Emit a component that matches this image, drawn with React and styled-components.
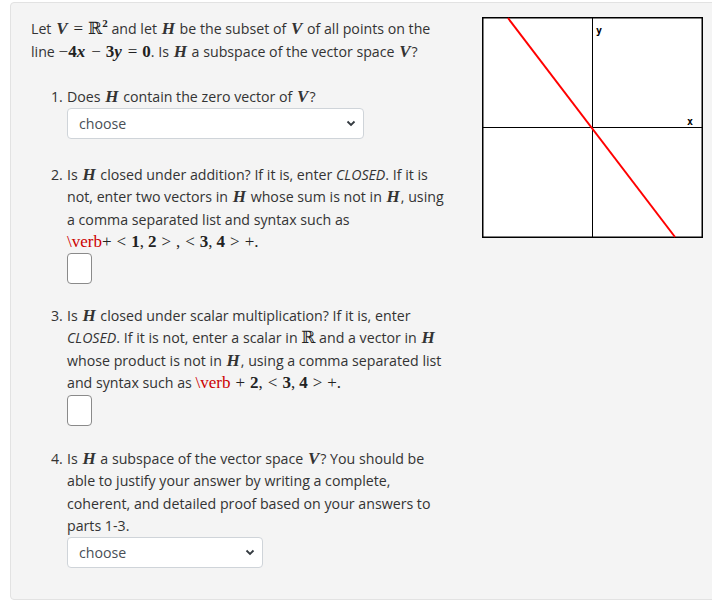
import React from 'react'
import styled, { createGlobalStyle } from 'styled-components'

const Global = createGlobalStyle`
    html, body {
        margin: 0;
        padding: 0;
        background: #ffffff;
        overflow: hidden;
    }
    body {
        font-family: "Open Sans", "Liberation Sans", sans-serif;
        font-size: 14.2px;
        color: #333333;
    }
`

const Panel = styled.div`
    margin: 2px 0 0 10px;
    width: 760px;
    height: 598px;
    box-sizing: border-box;
    background: #f4f4f4;
    border: 1px solid #e2e2e2;
    border-radius: 4px;
    padding: 15px 0 0 20px;
    display: flex;
    gap: 35px;
    align-items: flex-start;
`

const TextCol = styled.div`
    width: 416px;
    line-height: 22.5px;
`

const Para = styled.p`
    margin: 0;
`

const Item = styled.div`
    display: flex;
    margin-top: ${props => props.gap || 24}px;
`

const ItemNum = styled.span`
    width: 16px;
    padding-left: 20px;
    flex-shrink: 0;
`

const ItemBody = styled.div`
    flex: 1;
`

const Var = styled.span`
    font-family: "Liberation Serif", "DejaVu Serif", serif;
    font-style: italic;
    font-weight: bold;
    font-size: 17px;
    line-height: 0;
    padding: 0 1px;
`

const MathRun = styled.span`
    font-family: "Liberation Serif", "DejaVu Serif", serif;
    font-size: 17px;
    line-height: 0;
    white-space: nowrap;
    color: #222;
    & b {
        font-weight: bold;
    }
    & i {
        font-weight: bold;
        padding-right: 1px;
    }
    & sup {
        font-size: 11px;
        line-height: 0;
    }
`

const Op = styled.span`
    padding: 0 ${props => props.sp ?? 5}px;
    font-weight: normal;
`

const Err = styled.span`
    color: #cc0000;
`

const Emph = styled.em`
    font-style: italic;
`

const SelectWrap = styled.div`
    position: relative;
    width: ${props => props.w}px;
    height: 31px;
    margin-top: ${props => props.top || 0}px;
`

const Select = styled.select`
    appearance: none;
    -webkit-appearance: none;
    width: 100%;
    height: 100%;
    box-sizing: border-box;
    border: 1px solid #cfd4d9;
    border-radius: 4px;
    background: #ffffff;
    font-family: "Open Sans", "Liberation Sans", sans-serif;
    font-size: 14.2px;
    color: #495057;
    padding: 0 11px;
    outline: none;
`

const Chevron = styled.svg`
    position: absolute;
    right: 8px;
    top: 12px;
    pointer-events: none;
`

const AnswerBox = styled.input`
    display: block;
    width: 25px;
    height: 31px;
    box-sizing: border-box;
    border: 1px solid #8a8a8a;
    border-radius: 4px;
    background: #ffffff;
    margin-top: ${props => props.top || 0}px;
    padding: 0;
`

const Graph = styled.svg`
    flex-shrink: 0;
    display: block;
    margin-top: -1px;
`

const Choose = ({ w, top }) => (
    <SelectWrap w={w} top={top}>
        <Select defaultValue="choose">
            <option value="choose">choose</option>
            <option value="yes">Yes</option>
            <option value="no">No</option>
        </Select>
        <Chevron width="10" height="7" viewBox="0 0 10 7">
            <path d="M1.5 1.5 L5 5 L8.5 1.5" fill="none" stroke="#343a40" strokeWidth="1.8" />
        </Chevron>
    </SelectWrap>
)

const App = () => {
    return (
        <>
            <Global />
            <Panel>
                <TextCol>
                    <Para>
                        Let <Var>V</Var><MathRun><Op>=</Op>ℝ<sup><b>2</b></sup></MathRun> and let <Var>H</Var> be the subset of <Var>V</Var> of all points on the line{' '}
                        <MathRun>−<b>4</b><i><em>x</em></i><Op>−</Op><b>3</b><i><em>y</em></i><Op>=</Op><b>0</b></MathRun>. Is <Var>H</Var> a subspace of the vector space <Var>V</Var>?
                    </Para>

                    <Item gap={23}>
                        <ItemNum>1.</ItemNum>
                        <ItemBody>
                            Does <Var>H</Var> contain the zero vector of <Var>V</Var>?
                            <Choose w={297} top={-1} />
                        </ItemBody>
                    </Item>

                    <Item gap={25}>
                        <ItemNum>2.</ItemNum>
                        <ItemBody>
                            Is <Var>H</Var> closed under addition? If it is, enter <Emph>CLOSED</Emph>. If it is not, enter two vectors in <Var>H</Var> whose sum is not in <Var>H</Var>, using a comma separated list and syntax such as{' '}
                            <MathRun><Err>\verb</Err>+<Op>&lt;</Op><b>1</b>,<Op sp={2}></Op><b>2</b><Op>&gt;</Op>,<Op>&lt;</Op><b>3</b>,<Op sp={2}></Op><b>4</b><Op>&gt;</Op>+.</MathRun>
                            <AnswerBox type="text" top={-1} />
                        </ItemBody>
                    </Item>

                    <Item gap={21}>
                        <ItemNum>3.</ItemNum>
                        <ItemBody>
                            Is <Var>H</Var> closed under scalar multiplication? If it is, enter <Emph>CLOSED</Emph>. If it is not, enter a scalar in <MathRun>ℝ</MathRun> and a vector in <Var>H</Var> whose product is not in <Var>H</Var>, using a comma separated list and syntax such as{' '}
                            <MathRun><Err>\verb</Err><Op>+</Op><b>2</b>,<Op>&lt;</Op><b>3</b>,<Op sp={2}></Op><b>4</b><Op>&gt;</Op>+.</MathRun>
                            <AnswerBox type="text" top={0} />
                        </ItemBody>
                    </Item>

                    <Item gap={22}>
                        <ItemNum>4.</ItemNum>
                        <ItemBody>
                            Is <Var>H</Var> a subspace of the vector space <Var>V</Var>? You should be able to justify your answer by writing a complete, coherent, and detailed proof based on your answers to parts 1-3.
                            <Choose w={196} top={-1} />
                        </ItemBody>
                    </Item>
                </TextCol>

                <Graph width="221" height="221" viewBox="0 0 221 221">
                    <rect x="0.75" y="0.75" width="219.5" height="219.5" fill="#ffffff" stroke="#000" strokeWidth="1.5" />
                    <line x1="110.5" y1="0" x2="110.5" y2="221" stroke="#000" strokeWidth="1" />
                    <line x1="0" y1="110.5" x2="221" y2="110.5" stroke="#000" strokeWidth="1" />
                    <line x1="26" y1="1" x2="193" y2="220" stroke="#ff0000" strokeWidth="2" />
                    <text x="114" y="17" fontFamily="DejaVu Sans Mono, monospace" fontWeight="bold" fontSize="10" fill="#000">y</text>
                    <text x="205" y="108" fontFamily="DejaVu Sans Mono, monospace" fontWeight="bold" fontSize="10" fill="#000">x</text>
                </Graph>
            </Panel>
        </>
    )
}

export default App
